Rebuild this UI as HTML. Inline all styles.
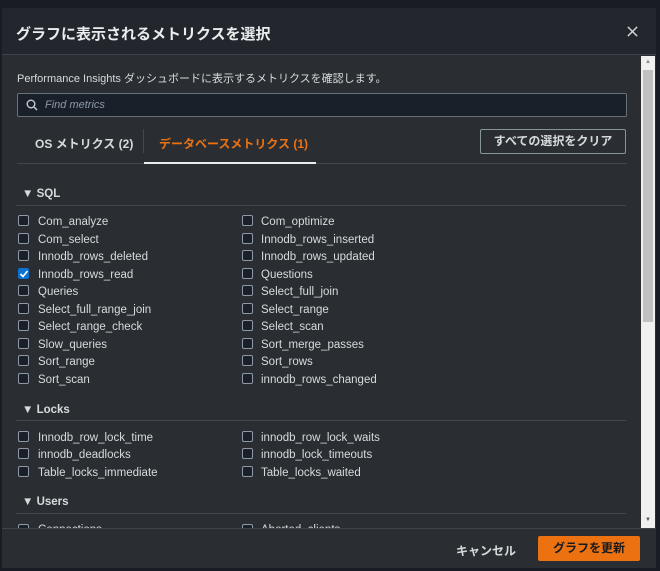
<!DOCTYPE html>
<html><head><meta charset="utf-8"><style>
*{margin:0;padding:0;box-sizing:border-box}
body{width:660px;height:571px;background:#191c23;font-family:"Liberation Sans","Noto Sans CJK JP",sans-serif;color:#d5dbdb;position:relative;overflow:hidden}
.dlg{position:absolute;left:2px;top:8px;width:654px;height:560px;background:#2a2e33}
.hdr{position:absolute;left:0;top:0;width:654px;height:47px;background:#23272d;border-bottom:1px solid #3d434b}
.hdr h1{position:absolute;left:14px;top:15px;font-size:15px;font-weight:bold;color:#eaeded}
.x{position:absolute;left:624px;top:17px;width:13px;height:13px}
.abs{position:absolute;white-space:nowrap}
.sb{position:absolute;left:641px;top:56px;width:14px;height:472px;background:#f0f0f0}
.thumb{position:absolute;left:643px;top:70px;width:10px;height:252px;background:#c1c1c1}
.cb{position:absolute;width:11px;height:11px;border:1px solid #8d99a8;border-radius:2px;background:#1b2028}
.cb.on{background:#0972d3;border-color:#0972d3}
.t{position:absolute;font-size:11.5px;color:#d5dbdb;white-space:nowrap;margin-top:2px}
.sec{position:absolute;left:22px;font-size:11.5px;font-weight:bold;color:#d5dbdb;margin-top:2px}
.line{position:absolute;left:16px;width:610px;height:1px;background:#414750}
.foot{position:absolute;left:0;top:521px;width:654px;height:39px;background:#2a2e33;border-top:1px solid #3d434b}
</style></head><body>
<div class="dlg">
<div class="hdr"><h1>グラフに表示されるメトリクスを選択</h1>
<svg class="x" viewBox="0 0 14 14"><path d="M2 2L12 12M12 2L2 12" stroke="#d5dbdb" stroke-width="1.5"/></svg></div>
</div>
<div class="sb"></div><div class="thumb"></div>
<div class="abs" style="left:645px;top:59px;font-size:6px;color:#888">▲</div>
<div class="abs" style="left:645px;top:517px;font-size:6px;color:#555">▼</div>
<div class="abs" style="left:17px;top:70px;font-size:11px;color:#d5dbdb">Performance Insights ダッシュボードに表示するメトリクスを確認します。</div>
<div class="abs" style="left:17px;top:93px;width:610px;height:24px;background:#1a2029;border:1px solid #687078;border-radius:2px"></div>
<svg class="abs" style="left:26px;top:99px" width="12" height="12" viewBox="0 0 12 12"><circle cx="5" cy="5" r="3.8" stroke="#c6ccd2" stroke-width="1.4" fill="none"/><path d="M8 8L11 11" stroke="#c6ccd2" stroke-width="1.5"/></svg>
<div class="abs" style="left:45px;top:99px;font-size:11px;font-style:italic;color:#8d99a8">Find metrics</div>
<div class="abs" style="left:35px;top:135px;font-size:12px;font-weight:bold;color:#d5dbdb">OS メトリクス (2)</div>
<div class="abs" style="left:143px;top:129px;width:1px;height:24px;background:#414750"></div>
<div class="abs" style="left:159px;top:135px;font-size:12px;font-weight:bold;color:#ec7211">データベースメトリクス (1)</div>
<div class="abs" style="left:17px;top:163px;width:610px;height:1px;background:#414750"></div>
<div class="abs" style="left:144px;top:162px;width:172px;height:2px;background:#eaeded"></div>
<div class="abs" style="left:480px;top:129px;width:146px;height:25px;border:1px solid #879596;border-radius:2px;font-size:12px;font-weight:bold;color:#d5dbdb;text-align:center;line-height:23px">すべての選択をクリア</div>

<div class="sec" style="top:186px">▼ SQL</div><div class="line" style="top:205px"></div>
<div class="sec" style="top:402px">▼ Locks</div><div class="line" style="top:420px"></div>
<div class="sec" style="top:494px">▼ Users</div><div class="line" style="top:513px"></div>

<div class="cb" style="left:18px;top:215px"></div><div class="t" style="left:38px;top:214px">Com_analyze</div>
<div class="cb" style="left:242px;top:215px"></div><div class="t" style="left:261px;top:214px">Com_optimize</div>
<div class="cb" style="left:18px;top:233px"></div><div class="t" style="left:38px;top:232px">Com_select</div>
<div class="cb" style="left:242px;top:233px"></div><div class="t" style="left:261px;top:232px">Innodb_rows_inserted</div>
<div class="cb" style="left:18px;top:250px"></div><div class="t" style="left:38px;top:249px">Innodb_rows_deleted</div>
<div class="cb" style="left:242px;top:250px"></div><div class="t" style="left:261px;top:249px">Innodb_rows_updated</div>
<div class="cb on" style="left:18px;top:268px"><svg style="position:absolute;left:0;top:0" width="10" height="10" viewBox="0 0 10 10"><path d="M1.5 5L4 7.5L8.5 2" stroke="#fff" stroke-width="1.6" fill="none"/></svg></div><div class="t" style="left:38px;top:267px">Innodb_rows_read</div>
<div class="cb" style="left:242px;top:268px"></div><div class="t" style="left:261px;top:267px">Questions</div>
<div class="cb" style="left:18px;top:285px"></div><div class="t" style="left:38px;top:284px">Queries</div>
<div class="cb" style="left:242px;top:285px"></div><div class="t" style="left:261px;top:284px">Select_full_join</div>
<div class="cb" style="left:18px;top:303px"></div><div class="t" style="left:38px;top:302px">Select_full_range_join</div>
<div class="cb" style="left:242px;top:303px"></div><div class="t" style="left:261px;top:302px">Select_range</div>
<div class="cb" style="left:18px;top:320px"></div><div class="t" style="left:38px;top:319px">Select_range_check</div>
<div class="cb" style="left:242px;top:320px"></div><div class="t" style="left:261px;top:319px">Select_scan</div>
<div class="cb" style="left:18px;top:338px"></div><div class="t" style="left:38px;top:337px">Slow_queries</div>
<div class="cb" style="left:242px;top:338px"></div><div class="t" style="left:261px;top:337px">Sort_merge_passes</div>
<div class="cb" style="left:18px;top:355px"></div><div class="t" style="left:38px;top:354px">Sort_range</div>
<div class="cb" style="left:242px;top:355px"></div><div class="t" style="left:261px;top:354px">Sort_rows</div>
<div class="cb" style="left:18px;top:373px"></div><div class="t" style="left:38px;top:372px">Sort_scan</div>
<div class="cb" style="left:242px;top:373px"></div><div class="t" style="left:261px;top:372px">innodb_rows_changed</div>

<div class="cb" style="left:18px;top:431px"></div><div class="t" style="left:38px;top:430px">Innodb_row_lock_time</div>
<div class="cb" style="left:242px;top:431px"></div><div class="t" style="left:261px;top:430px">innodb_row_lock_waits</div>
<div class="cb" style="left:18px;top:448px"></div><div class="t" style="left:38px;top:447px">innodb_deadlocks</div>
<div class="cb" style="left:242px;top:448px"></div><div class="t" style="left:261px;top:447px">innodb_lock_timeouts</div>
<div class="cb" style="left:18px;top:466px"></div><div class="t" style="left:38px;top:465px">Table_locks_immediate</div>
<div class="cb" style="left:242px;top:466px"></div><div class="t" style="left:261px;top:465px">Table_locks_waited</div>

<div class="cb" style="left:18px;top:524px"></div><div class="t" style="left:38px;top:522px">Connections</div>
<div class="cb" style="left:242px;top:524px"></div><div class="t" style="left:261px;top:522px">Aborted_clients</div>

<div class="foot" style="left:2px;top:528px;width:654px"></div>
<div class="abs" style="left:456px;top:542px;font-size:12px;font-weight:bold;color:#d5dbdb">キャンセル</div>
<div class="abs" style="left:538px;top:536px;width:102px;height:25px;background:#ec7211;border-radius:2px;font-size:12px;font-weight:bold;color:#16191f;text-align:center;line-height:25px">グラフを更新</div>
</body></html>
